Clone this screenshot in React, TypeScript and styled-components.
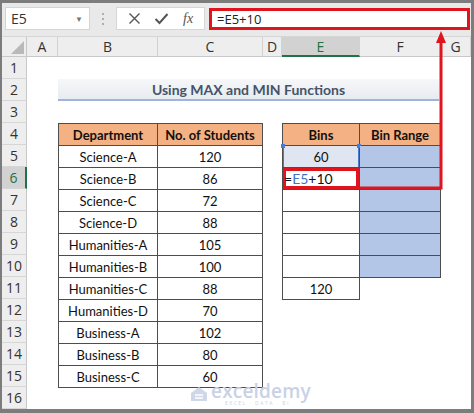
import { Fragment } from "react";
import styled, { createGlobalStyle } from "styled-components";

const GlobalStyle = createGlobalStyle`
  html, body {
    margin: 0;
    padding: 0;
    background: #ffffff;
  }
  body {
    font-family: "Open Sans", "Liberation Sans", sans-serif;
  }
`;

const RED = "#e0141d";
const GRID_LINE = "#4d4d4d";

const Frame = styled.div`
  position: relative;
  width: 474px;
  height: 413px;
  box-sizing: border-box;
  border-style: solid;
  border-color: #7c7c7c;
  border-width: 3px 3px 4px 2px;
  background: #ffffff;
  overflow: hidden;
  display: flex;
  flex-direction: column;
`;

/* ---------- formula bar ---------- */

const FormulaBar = styled.div`
  height: 34px;
  box-sizing: border-box;
  background: #e9e9e9;
  border-bottom: 1px solid #d6d6d6;
  display: flex;
  align-items: center;
  padding: 0 1px 2px 3px;
`;

const NameBox = styled.div`
  width: 85px;
  height: 23px;
  box-sizing: border-box;
  background: #ffffff;
  border: 1px solid #d4d4d4;
  display: flex;
  align-items: center;
  justify-content: space-between;
  padding: 0 6px 0 5px;
  font-size: 14px;
  color: #333333;
`;

const Caret = styled.span`
  font-size: 8px;
  color: #777777;
`;

const Dots = styled.div`
  width: 26px;
  display: flex;
  flex-direction: column;
  align-items: center;
  gap: 3px;

  span {
    width: 2px;
    height: 2px;
    border-radius: 50%;
    background: #9a9a9a;
  }
`;

const ButtonBox = styled.div`
  width: 89px;
  height: 23px;
  box-sizing: border-box;
  background: #ffffff;
  border: 1px solid #d6d6d6;
  display: flex;
  align-items: center;
  justify-content: space-around;
  padding: 0 4px;
  color: #555555;
`;

const Fx = styled.span`
  font-family: "Liberation Serif", "DejaVu Serif", serif;
  font-style: italic;
  font-size: 14px;
  color: #555555;
`;

const FormulaInput = styled.div`
  flex: 1;
  height: 22px;
  margin-left: 4px;
  box-sizing: border-box;
  background: #ffffff;
  border: 3px solid ${RED};
  display: flex;
  align-items: center;
  padding-left: 5px;
  font-size: 13px;
  color: #222222;
`;

/* ---------- sheet ---------- */

const Sheet = styled.div`
  flex: 1;
  display: grid;
  grid-template-columns: 25px 31px 100px 105px 19px 78px 81px 1fr;
  grid-template-rows: 20px repeat(16, 22px);
  background: #ffffff;
`;

const Corner = styled.div`
  grid-row: 1;
  grid-column: 1;
  position: relative;
  background: #eeeeee;
  border-right: 1px solid #c8c8c8;
  border-bottom: 1px solid #c8c8c8;

  &::after {
    content: "";
    position: absolute;
    right: 2px;
    bottom: 2px;
    border-left: 13px solid transparent;
    border-bottom: 13px solid #b9b9b9;
  }
`;

const ColHeader = styled.div<{ $col: number; $active?: boolean }>`
  grid-row: 1;
  grid-column: ${(p) => p.$col};
  box-sizing: border-box;
  background: ${(p) => (p.$active ? "#d2d2d2" : "#eeeeee")};
  border-right: 1px solid #d2d2d2;
  border-bottom: ${(p) => (p.$active ? "2px solid #217346" : "1px solid #c8c8c8")};
  display: flex;
  align-items: center;
  justify-content: center;
  font-size: 14px;
  color: ${(p) => (p.$active ? "#217346" : "#333333")};
`;

const RowHeader = styled.div<{ $row: number; $active?: boolean }>`
  grid-row: ${(p) => p.$row + 1};
  grid-column: 1;
  box-sizing: border-box;
  background: ${(p) => (p.$active ? "#d2d2d2" : "#eeeeee")};
  border-right: ${(p) => (p.$active ? "2px solid #217346" : "1px solid #c8c8c8")};
  border-bottom: 1px solid #d6d6d6;
  display: flex;
  align-items: center;
  justify-content: center;
  font-size: 14px;
  color: ${(p) => (p.$active ? "#217346" : "#333333")};
`;

const Title = styled.div`
  grid-row: 3;
  grid-column: 3 / 8;
  margin-right: 2px;
  box-sizing: border-box;
  background: linear-gradient(to bottom, #f6f7f9, #e8ebf0);
  border-bottom: 2px solid #9fb4dc;
  display: flex;
  align-items: center;
  justify-content: center;
  font-family: Lato, "Liberation Sans", sans-serif;
  font-weight: 700;
  font-size: 14px;
  color: #44546a;
`;

const DataTable = styled.div<{ $area: string; $cols: string }>`
  grid-area: ${(p) => p.$area};
  align-self: start;
  display: grid;
  grid-template-columns: ${(p) => p.$cols};
  grid-auto-rows: 22px;
  border-top: 1px solid ${GRID_LINE};
  border-left: 1px solid ${GRID_LINE};
  font-family: Lato, "Liberation Sans", sans-serif;
  font-size: 13px;
  color: #111111;
`;

const Cell = styled.div<{ $head?: boolean; $fill?: string; $bare?: boolean }>`
  position: relative;
  box-sizing: border-box;
  border-right: ${(p) => (p.$bare ? "none" : `1px solid ${GRID_LINE}`)};
  border-bottom: ${(p) => (p.$bare ? "none" : `1px solid ${GRID_LINE}`)};
  background: ${(p) => (p.$head ? "#f4b183" : p.$fill ?? "transparent")};
  font-weight: ${(p) => (p.$head ? 700 : 400)};
  display: flex;
  align-items: center;
  justify-content: center;
`;

const RefCell = styled(Cell)`
  background: #dfe6f1;
  box-shadow: inset 1px 0 0 #4a7bd0, inset -1px 0 0 #4a7bd0;

  &::before,
  &::after {
    content: "";
    position: absolute;
    top: -2px;
    width: 4px;
    height: 4px;
    background: #4a7bd0;
  }
  &::before {
    left: -2px;
  }
  &::after {
    right: -2px;
  }
`;

const EditCell = styled(Cell)`
  justify-content: flex-start;
  padding-left: 1px;
  font-size: 14px;
  box-shadow: inset 0 0 0 3px ${RED};

  em {
    font-style: normal;
    color: #4472c4;
  }
`;

const Connector = styled.svg`
  position: absolute;
  left: 0;
  top: 0;
  width: 469px;
  height: 406px;
  pointer-events: none;
`;

const Watermark = styled.div`
  position: absolute;
  left: 188px;
  top: 379px;
  display: flex;
  align-items: center;
  gap: 3px;
  color: #c9d2e5;
`;

const MarkText = styled.div`
  display: flex;
  flex-direction: column;
  line-height: 1;

  strong {
    font-family: "Open Sans", "Liberation Sans", sans-serif;
    font-size: 19px;
    font-weight: 600;
    letter-spacing: 0.2px;
  }
  small {
    font-size: 5px;
    letter-spacing: 1.5px;
    margin-left: 14px;
  }
`;

const colLetters = ["A", "B", "C", "D", "E", "F", "G"];

const departments: [string, number][] = [
  ["Science-A", 120],
  ["Science-B", 86],
  ["Science-C", 72],
  ["Science-D", 88],
  ["Humanities-A", 105],
  ["Humanities-B", 100],
  ["Humanities-C", 88],
  ["Humanities-D", 70],
  ["Business-A", 102],
  ["Business-B", 80],
  ["Business-C", 60],
];

const BIN_FILL = "#b4c6e7";

const App = () => {
  return (
    <>
      <GlobalStyle />
      <Frame>
        <FormulaBar>
          <NameBox>
            E5
            <Caret>▼</Caret>
          </NameBox>
          <Dots>
            <span />
            <span />
            <span />
          </Dots>
          <ButtonBox>
            <svg width="13" height="13" viewBox="0 0 13 13">
              <path d="M1.5 1.5 L11.5 11.5 M11.5 1.5 L1.5 11.5" stroke="#555" strokeWidth="1.4" fill="none" />
            </svg>
            <svg width="15" height="13" viewBox="0 0 15 13">
              <path d="M1.5 7 L5.5 11 L13.5 2" stroke="#555" strokeWidth="2" fill="none" />
            </svg>
            <Fx>fx</Fx>
          </ButtonBox>
          <FormulaInput>=E5+10</FormulaInput>
        </FormulaBar>

        <Sheet>
          <Corner />
          {colLetters.map((c, i) => (
            <ColHeader key={c} $col={i + 2} $active={c === "E"}>
              {c}
            </ColHeader>
          ))}
          {Array.from({ length: 16 }, (_, i) => (
            <RowHeader key={i} $row={i + 1} $active={i + 1 === 6}>
              {i + 1}
            </RowHeader>
          ))}

          <Title>Using MAX and MIN Functions</Title>

          <DataTable $area="5 / 3 / 17 / 5" $cols="99px 105px">
            <Cell $head>Department</Cell>
            <Cell $head>No. of Students</Cell>
            {departments.map(([name, count]) => (
              <Fragment key={name}>
                <Cell>{name}</Cell>
                <Cell>{count}</Cell>
              </Fragment>
            ))}
          </DataTable>

          <DataTable $area="5 / 6 / 13 / 8" $cols="77px 81px">
            <Cell $head>Bins</Cell>
            <Cell $head>Bin Range</Cell>
            <RefCell>60</RefCell>
            <Cell $fill={BIN_FILL} />
            <EditCell>
              =<em>E5</em>+10
            </EditCell>
            <Cell $fill={BIN_FILL} />
            {[0, 1, 2, 3].map((i) => (
              <Fragment key={i}>
                <Cell />
                <Cell $fill={BIN_FILL} />
              </Fragment>
            ))}
            <Cell>120</Cell>
            <Cell $bare />
          </DataTable>
        </Sheet>

        <Connector viewBox="0 0 469 406">
          <path d="M356 185 H439 V38" stroke={RED} strokeWidth="3" fill="none" />
          <path d="M439 28 L434 40 L444 40 Z" fill={RED} />
        </Connector>

        <Watermark>
          <svg width="18" height="16" viewBox="0 0 18 16">
            <path d="M1 7 L9 1 L17 7 V15 H1 Z" fill="#cfd7e8" />
            <path d="M5 9 H13 M5 12 H13" stroke="#ffffff" strokeWidth="1.5" />
          </svg>
          <MarkText>
            <strong>exceldemy</strong>
            <small>EXCEL · DATA · BI</small>
          </MarkText>
        </Watermark>
      </Frame>
    </>
  );
};

export default App;
